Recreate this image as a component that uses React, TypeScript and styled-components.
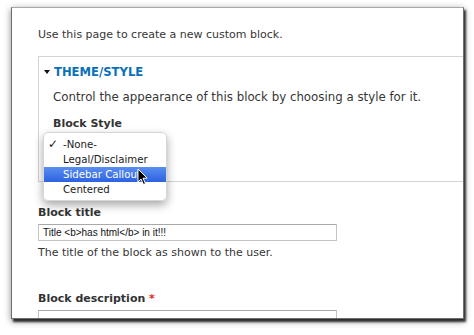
import styled, { createGlobalStyle } from 'styled-components';

const Global = createGlobalStyle`
  html, body {
    margin: 0;
    background: #ffffff;
  }
  body {
    font-family: "DejaVu Sans", Verdana, sans-serif;
    color: #363636;
  }
`;

const Stage = styled.div`
  width: 474px;
  height: 335px;
  padding: 7px 0 0 11px;
  box-sizing: border-box;
  overflow: hidden;
`;

const Window = styled.div`
  position: relative;
  width: 453px;
  height: 312px;
  box-sizing: border-box;
  border: 1px solid #6d6d6d;
  border-top-color: #a8a8a8;
  background: #ffffff;
  box-shadow: 2px 3px 2px rgba(0, 0, 0, 0.75), 0 2px 7px rgba(0, 0, 0, 0.45);
  overflow: hidden;
  padding: 19px 0 0 26px;
`;

const Fieldset = styled.div`
  width: 460px;
  height: 126px;
  margin-top: 13px;
  box-sizing: border-box;
  border: 1px solid #d4d4d4;
  padding: 7px 0 0 14px;
`;

const Legend = styled.div`
  display: flex;
  align-items: center;
  gap: 4px;
  margin-left: -9px;
  font-size: 11.6px;
  line-height: 16px;
  font-weight: bold;
  color: #0b70b8;
`;

const Triangle = styled.span`
  width: 0;
  height: 0;
  border-left: 3px solid transparent;
  border-right: 3px solid transparent;
  border-top: 4px solid #111;
`;

const Text = styled.p<{ $top: number; $size?: number }>`
  margin: ${(p) => p.$top}px 0 0;
  font-size: ${(p) => p.$size ?? 11}px;
  line-height: 16px;
`;

const Label = styled.div<{ $top: number }>`
  margin-top: ${(p) => p.$top}px;
  font-size: 11px;
  line-height: 16px;
  font-weight: bold;
  color: #333;
`;

const Required = styled.span`
  color: #e0261b;
`;

const SelectWrap = styled.div`
  position: relative;
  height: 49px;
`;

const Popup = styled.ul`
  position: absolute;
  top: 0;
  left: -10px;
  width: 124px;
  margin: 0;
  padding: 4px 0 3px;
  list-style: none;
  background: rgba(255, 255, 255, 0.97);
  border: 1px solid #d6d6d6;
  border-radius: 5px;
  box-sizing: border-box;
  box-shadow: 0 4px 10px rgba(0, 0, 0, 0.35);
  z-index: 2;
`;

const Option = styled.li<{ $active?: boolean }>`
  position: relative;
  height: 15px;
  line-height: 15px;
  padding-left: 19px;
  font-size: 10.2px;
  color: ${(p) => (p.$active ? '#ffffff' : '#1a1a1a')};
  background: ${(p) => (p.$active ? 'linear-gradient(#5b8ef0, #2c62e0)' : 'transparent')};
`;

const Check = styled.span`
  position: absolute;
  left: 4px;
  top: 0;
  font-size: 12px;
  font-weight: bold;
`;

const Cursor = styled.svg`
  position: absolute;
  left: 84px;
  top: 36px;
  z-index: 3;
`;

const Input = styled.div<{ $top: number }>`
  margin-top: ${(p) => p.$top}px;
  width: 299px;
  height: 17px;
  box-sizing: border-box;
  border: 1px solid #c4c4c4;
  border-top-color: #a9a9a9;
  padding-left: 4px;
  font-family: "Liberation Sans", Arial, sans-serif;
  font-size: 10px;
  line-height: 15px;
  color: #111;
`;

export default function App() {
  return (
    <Stage>
      <Global />
      <Window>
        <Text $top={0}>Use this page to create a new custom block.</Text>
        <Fieldset>
          <Legend>
            <Triangle />
            THEME/STYLE
          </Legend>
          <Text $top={9} $size={11.8}>
            Control the appearance of this block by choosing a style for it.
          </Text>
          <Label $top={11}>Block Style</Label>
          <SelectWrap>
            <Popup>
              <Option>
                <Check>✓</Check>-None-
              </Option>
              <Option>Legal/Disclaimer</Option>
              <Option $active>Sidebar Callout</Option>
              <Option>Centered</Option>
            </Popup>
            <Cursor width="12" height="18" viewBox="0 0 12 18">
              <path
                d="M1 1 L1 14 L4 11 L6.5 16.5 L8.5 15.6 L6 10.2 L10.2 10.2 Z"
                fill="#000"
                stroke="#fff"
                strokeWidth="1"
                strokeLinejoin="round"
              />
            </Cursor>
          </SelectWrap>
        </Fieldset>
        <Label $top={23}>Block title</Label>
        <Input $top={3}>Title &lt;b&gt;has html&lt;/b&gt; in it!!!</Input>
        <Text $top={4}>The title of the block as shown to the user.</Text>
        <Label $top={30}>
          Block description <Required>*</Required>
        </Label>
        <Input $top={3} />
      </Window>
    </Stage>
  );
}
